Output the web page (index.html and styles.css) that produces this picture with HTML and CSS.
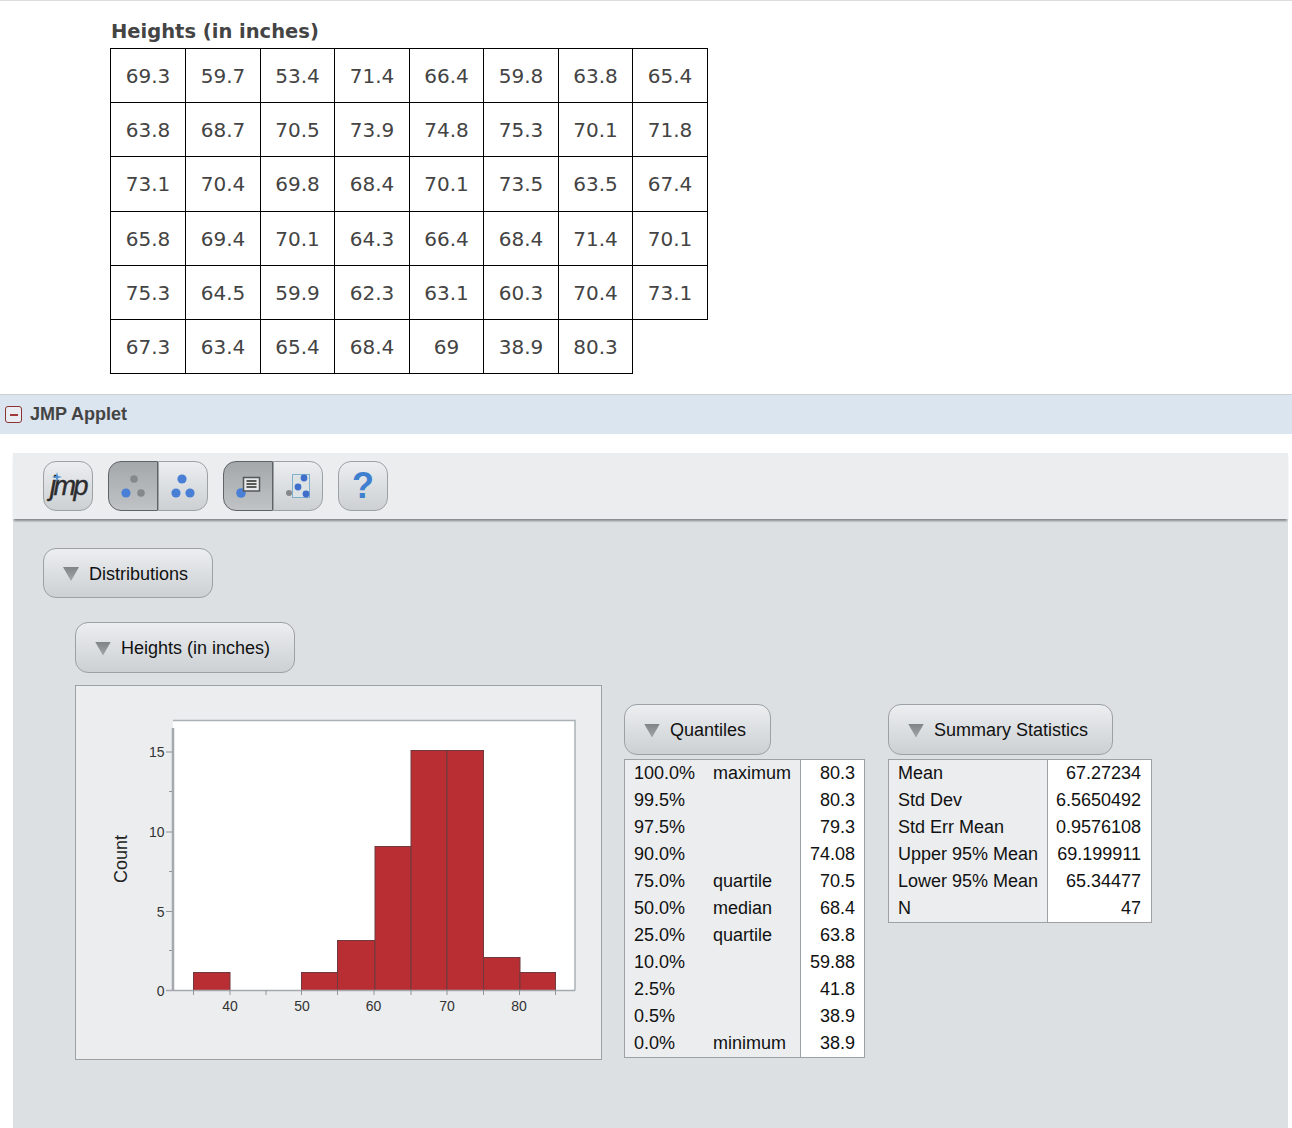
FILE: index.html
```html
<!DOCTYPE html>
<html lang="en">
<head>
    <meta charset="UTF-8">
    <meta name="viewport" content="width=device-width, initial-scale=1.0">
    <title>Heights (in inches)</title>
    <link rel="stylesheet" href="styles.css">
</head>
<body>
    <div class="data-block">
        <h3 class="data-title">Heights (in inches)</h3>
        <table class="data-table">
            <tr><td>69.3</td><td>59.7</td><td>53.4</td><td>71.4</td><td>66.4</td><td>59.8</td><td>63.8</td><td>65.4</td></tr>
            <tr><td>63.8</td><td>68.7</td><td>70.5</td><td>73.9</td><td>74.8</td><td>75.3</td><td>70.1</td><td>71.8</td></tr>
            <tr><td>73.1</td><td>70.4</td><td>69.8</td><td>68.4</td><td>70.1</td><td>73.5</td><td>63.5</td><td>67.4</td></tr>
            <tr><td>65.8</td><td>69.4</td><td>70.1</td><td>64.3</td><td>66.4</td><td>68.4</td><td>71.4</td><td>70.1</td></tr>
            <tr><td>75.3</td><td>64.5</td><td>59.9</td><td>62.3</td><td>63.1</td><td>60.3</td><td>70.4</td><td>73.1</td></tr>
            <tr><td>67.3</td><td>63.4</td><td>65.4</td><td>68.4</td><td>69</td><td>38.9</td><td>80.3</td></tr>
        </table>
    </div>

    <div class="section-bar">
        <span class="collapse-box"><span class="collapse-minus"></span></span>
        <span class="section-title">JMP Applet</span>
    </div>

    <div class="applet">
        <div class="toolbar">
            <div class="tool-btn tool-single jmp-logo">
                <svg class="logo-star" width="10" height="10" viewBox="0 0 10 10"><path d="M5 0 L6 4 L10 5 L6 6 L5 10 L4 6 L0 5 L4 4 Z" fill="#4a8fd8"/></svg>
                <span>jmp</span>
            </div>
            <div class="tool-group">
                <div class="tool-btn tool-left active">
                    <svg width="50" height="50" viewBox="0 0 50 50">
                        <circle cx="26" cy="18" r="3.8" fill="#85898c"/>
                        <circle cx="18" cy="32" r="4.6" fill="#4a7fd6"/>
                        <circle cx="33" cy="32" r="3.8" fill="#85898c"/>
                    </svg>
                </div>
                <div class="tool-btn tool-right">
                    <svg width="50" height="50" viewBox="0 0 50 50">
                        <circle cx="24" cy="18" r="4.6" fill="#4a7fd6"/>
                        <circle cx="18" cy="32" r="4.6" fill="#4a7fd6"/>
                        <circle cx="32" cy="32" r="4.6" fill="#4a7fd6"/>
                    </svg>
                </div>
            </div>
            <div class="tool-group">
                <div class="tool-btn tool-left active">
                    <svg width="50" height="50" viewBox="0 0 50 50">
                        <circle cx="18" cy="32" r="4.8" fill="#4a7fd6"/>
                        <rect x="20.5" y="16.5" width="16" height="13.500" fill="#e6e8ea" stroke="#55585b" stroke-width="1.5"/>
                        <path d="M23.500 20H33.500M23.500 23H33.500M23.500 26H33.500" stroke="#2a2a2a" stroke-width="1.5"/>
                    </svg>
                </div>
                <div class="tool-btn tool-right">
                    <svg width="50" height="50" viewBox="0 0 50 50">
                        <rect x="19.5" y="13.5" width="17" height="23" fill="#dde2e5" stroke="#7fb0cc"/>
                        <circle cx="16" cy="32" r="3" fill="#85898c"/>
                        <circle cx="31" cy="17" r="3.4" fill="#3f6fcb"/>
                        <circle cx="25" cy="26" r="3.4" fill="#3f6fcb"/>
                        <circle cx="33" cy="33" r="3.4" fill="#3f6fcb"/>
                    </svg>
                </div>
            </div>
            <div class="tool-btn tool-single help-btn">?</div>
        </div>

        <div class="applet-body">
            <div class="outline-btn btn-distributions"><span class="tri"></span>Distributions</div>
            <div class="report">
                <div class="outline-btn btn-heights"><span class="tri"></span>Heights (in inches)</div>
                <div class="report-row">
                    <div class="chart-panel">
                        <svg class="chart" width="525" height="373" viewBox="76 686 525 373">
                            <rect x="173" y="720.5" width="402" height="270" fill="#fff"/>
                            <path d="M173 720.5H575V990.5" fill="none" stroke="#abb1b5" stroke-width="1.5"/>
                            <g fill="#b82e32" stroke="#6e3a40" stroke-width="1">
                                <rect x="193.5" y="972.5" width="36.5" height="18"/>
                                <rect x="301.5" y="972.5" width="36" height="18"/>
                                <rect x="337.5" y="940.5" width="37.5" height="50"/>
                                <rect x="375" y="846.5" width="36" height="144"/>
                                <rect x="411" y="750.5" width="36" height="240"/>
                                <rect x="447" y="750.5" width="36.5" height="240"/>
                                <rect x="483.5" y="957.5" width="36.5" height="33"/>
                                <rect x="520" y="972.5" width="35.5" height="18"/>
                            </g>
                            <path d="M173 728V990.5" stroke="#a3a9ae" stroke-width="2.5"/>
                            <path d="M166 990.5H575" stroke="#a3a9ae" stroke-width="1.5"/>
                            <path d="M166 752H172M169 791.5H172M166 832H172M169 871.5H172M166 911.5H172M169 950.5H172" stroke="#8f9599"/>
                            <path d="M193.5 990V995M230 990V995M266 990V995M301.5 990V995M337.5 990V995M374 990V995M411 990V995M447 990V995M483.5 990V995M519.5 990V995M555.5 990V995" stroke="#8f9599"/>
                            <g class="tick-label" text-anchor="end">
                                <text x="164.500" y="757">15</text>
                                <text x="164.500" y="837">10</text>
                                <text x="164.500" y="917">5</text>
                                <text x="164.500" y="996">0</text>
                            </g>
                            <g class="tick-label" text-anchor="middle">
                                <text x="230" y="1011">40</text>
                                <text x="302" y="1011">50</text>
                                <text x="373.500" y="1011">60</text>
                                <text x="447" y="1011">70</text>
                                <text x="519" y="1011">80</text>
                            </g>
                            <text class="axis-label" text-anchor="middle" transform="translate(127 859) rotate(-90)">Count</text>
                        </svg>
                    </div>
                    <div class="stats-col quantiles-col">
                        <div class="outline-btn btn-quantiles"><span class="tri"></span>Quantiles</div>
                        <table class="stats-table">
                            <tr><td class="pct">100.0%</td><td class="name">maximum</td><td class="val val-q">80.3</td></tr>
                            <tr><td class="pct">99.5%</td><td class="name"></td><td class="val val-q">80.3</td></tr>
                            <tr><td class="pct">97.5%</td><td class="name"></td><td class="val val-q">79.3</td></tr>
                            <tr><td class="pct">90.0%</td><td class="name"></td><td class="val val-q">74.08</td></tr>
                            <tr><td class="pct">75.0%</td><td class="name">quartile</td><td class="val val-q">70.5</td></tr>
                            <tr><td class="pct">50.0%</td><td class="name">median</td><td class="val val-q">68.4</td></tr>
                            <tr><td class="pct">25.0%</td><td class="name">quartile</td><td class="val val-q">63.8</td></tr>
                            <tr><td class="pct">10.0%</td><td class="name"></td><td class="val val-q">59.88</td></tr>
                            <tr><td class="pct">2.5%</td><td class="name"></td><td class="val val-q">41.8</td></tr>
                            <tr><td class="pct">0.5%</td><td class="name"></td><td class="val val-q">38.9</td></tr>
                            <tr><td class="pct">0.0%</td><td class="name">minimum</td><td class="val val-q">38.9</td></tr>
                        </table>
                    </div>
                    <div class="stats-col">
                        <div class="outline-btn btn-summary"><span class="tri"></span>Summary Statistics</div>
                        <table class="stats-table">
                            <tr><td class="label">Mean</td><td class="val val-s">67.27234</td></tr>
                            <tr><td class="label">Std Dev</td><td class="val val-s">6.5650492</td></tr>
                            <tr><td class="label">Std Err Mean</td><td class="val val-s">0.9576108</td></tr>
                            <tr><td class="label">Upper 95% Mean</td><td class="val val-s">69.199911</td></tr>
                            <tr><td class="label">Lower 95% Mean</td><td class="val val-s">65.34477</td></tr>
                            <tr><td class="label">N</td><td class="val val-s">47</td></tr>
                        </table>
                    </div>
                </div>
            </div>
        </div>
    </div>
</body>
</html>
```

FILE: styles.css
```css
* {
    padding: 0;
    margin: 0;
    box-sizing: border-box;
}

:root {
    --text-grey: #444;
    --line-grey: #9ba1a5;
    --panel-light: #ebedef;
    --panel-dark: #dce0e3;
}

body {
    background-color: #fff;
    font-family: "Liberation Sans", Arial, sans-serif;
    height: 1128px;
    overflow: hidden;
}

/* data table at the top */
.data-block {
    border-top: 1px solid #ddd;
    padding: 18px 0 20px 110px;
}

.data-title {
    font-family: "DejaVu Sans", Verdana, sans-serif;
    font-size: 19.5px;
    font-weight: bold;
    line-height: 26px;
    color: var(--text-grey);
    margin-left: 1px;
    margin-bottom: 3px;
}

.data-table {
    border-collapse: collapse;
    font-family: "DejaVu Sans", Verdana, sans-serif;
    font-size: 20px;
    color: var(--text-grey);
}

.data-table td {
    border: 1px solid #000;
    width: 75px;
    height: 54px;
    text-align: center;
    padding: 0;
}

.data-table td:nth-child(3),
.data-table td:nth-child(5),
.data-table td:nth-child(7) {
    width: 74px;
}

.data-table tr:nth-child(3) td {
    height: 55px;
}

/* section header */
.section-bar {
    display: flex;
    align-items: center;
    height: 40px;
    background-color: #dbe5ef;
    border-top: 1px solid #ccd0d4;
    padding-left: 5px;
}

.collapse-box {
    display: flex;
    align-items: center;
    justify-content: center;
    width: 17px;
    height: 17px;
    background-color: #e9edf1;
    border: 1.5px solid #8a3434;
    border-radius: 3px;
    margin-right: 8px;
}

.collapse-minus {
    width: 8px;
    height: 2px;
    background-color: #a33a3a;
}

.section-title {
    font-size: 18px;
    font-weight: bold;
    color: var(--text-grey);
}

/* applet */
.applet {
    width: 1275px;
    margin: 19px 0 0 13px;
}

.toolbar {
    display: flex;
    gap: 15px;
    height: 66px;
    padding: 8px 0 0 30px;
    background-color: var(--panel-light);
    box-shadow: 0 3px 2px -1px #85898c;
    position: relative;
}

.tool-group {
    display: flex;
}

.tool-btn {
    width: 50px;
    height: 50px;
    border: 1px solid var(--line-grey);
    background: linear-gradient(#eceef0, #ccd0d3);
}

.tool-btn svg {
    display: block;
    margin: -1px;
}

.tool-single {
    border-radius: 13px;
}

.tool-left {
    border-radius: 13px 0 0 13px;
    border-right: 0;
}

.tool-right {
    border-radius: 0 13px 13px 0;
}

.tool-btn.active {
    background: linear-gradient(#a4a8ab, #bfc3c6);
    border-color: #5f6367;
    border-right: 1px solid #5f6367;
}

.jmp-logo {
    position: relative;
    text-align: center;
    font-size: 27px;
    font-style: italic;
    line-height: 48px;
    letter-spacing: -2.5px;
    color: #2c2c2e;
    -webkit-text-stroke: 0.4px #2c2c2e;
}

.jmp-logo .logo-star {
    position: absolute;
    left: 8px;
    top: 10px;
    margin: 0;
}

.help-btn {
    text-align: center;
    font-size: 36px;
    font-weight: bold;
    line-height: 48px;
    color: #3f7fd0;
}

.applet-body {
    height: 609px;
    padding: 29px 0 0 30px;
    background-color: var(--panel-dark);
}

.outline-btn {
    display: flex;
    align-items: center;
    gap: 10px;
    height: 50px;
    padding: 2px 0 0 19px;
    font-size: 18px;
    color: #111;
    border: 1px solid var(--line-grey);
    border-radius: 13px;
    background: linear-gradient(#eceef0, #ccd0d3);
}

.tri {
    width: 16px;
    height: 14px;
    background: linear-gradient(#808487, #a2a6a9);
    clip-path: polygon(0 0, 100% 0, 50% 100%);
}

.btn-distributions {
    width: 170px;
}

.report {
    margin: 24px 0 0 32px;
}

.btn-heights {
    width: 220px;
    height: 51px;
}

.report-row {
    display: flex;
    align-items: flex-start;
    margin-top: 12px;
}

.chart-panel {
    width: 527px;
    height: 375px;
    border: 1px solid var(--line-grey);
    background-color: var(--panel-light);
    margin-right: 22px;
}

.chart {
    display: block;
}

.tick-label {
    font-size: 14px;
    fill: #333;
}

.axis-label {
    font-size: 18px;
    fill: #222;
}

.stats-col {
    margin-top: 19px;
}

.quantiles-col {
    margin-right: 23px;
}

.btn-quantiles {
    width: 147px;
    height: 51px;
}

.btn-summary {
    width: 225px;
    height: 51px;
}

.stats-table {
    border-collapse: separate;
    border-spacing: 0;
    table-layout: fixed;
    margin-top: 4px;
    font-size: 18px;
    color: #111;
    background-color: var(--panel-light);
    border: 1px solid var(--line-grey);
}

.stats-table td {
    height: 27px;
    padding: 0;
    white-space: nowrap;
}

.stats-table .pct {
    width: 88px;
    padding-left: 9px;
}

.stats-table .name {
    width: 87px;
}

.stats-table .label {
    width: 158px;
    padding-left: 9px;
}

.stats-table .val {
    text-align: right;
    padding-right: 9px;
    background-color: #fff;
    border-left: 1px solid var(--line-grey);
}

.stats-table .val-q {
    width: 64px;
}

.stats-table .val-s {
    width: 104px;
    padding-right: 10px;
}
```
